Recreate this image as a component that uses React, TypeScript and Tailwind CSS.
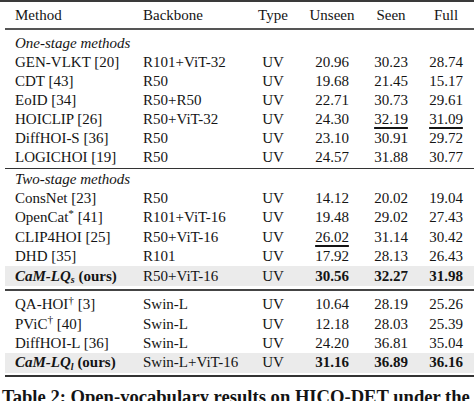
import type { ReactNode } from "react";

type Row = {
  method: ReactNode;
  backbone: string;
  unseen: string;
  seen: string;
  full: string;
  u?: ("unseen" | "seen" | "full")[];
  ours?: boolean;
  h?: string;
};

const grid = "grid grid-cols-[138px_107px_46px_72px_46px_64px] items-center";

function Cell({ v, under, bold }: { v: string; under?: boolean; bold?: boolean }) {
  return (
    <div className={`text-center ${bold ? "font-bold" : ""}`}>
      <span className={under ? "underline decoration-[1.5px] underline-offset-[3px]" : ""}>{v}</span>
    </div>
  );
}

function DataRow({ r }: { r: Row }) {
  return (
    <div className={`${grid} ${r.h ?? "h-[19px]"} ${r.ours ? "bg-[#ebebeb]" : ""}`}>
      <div className={`pl-[10px] whitespace-nowrap ${r.ours ? "font-bold" : ""}`}>{r.method}</div>
      <div className="whitespace-nowrap">{r.backbone}</div>
      <div className="text-center">UV</div>
      <Cell v={r.unseen} under={r.u?.includes("unseen")} bold={r.ours} />
      <Cell v={r.seen} under={r.u?.includes("seen")} bold={r.ours} />
      <Cell v={r.full} under={r.u?.includes("full")} bold={r.ours} />
    </div>
  );
}

function Section({ title, h }: { title: string; h: string }) {
  return <div className={`${h} flex items-center pl-[10px] italic`}>{title}</div>;
}

const oneStage: Row[] = [
  { method: "GEN-VLKT [20]", backbone: "R101+ViT-32", unseen: "20.96", seen: "30.23", full: "28.74" },
  { method: "CDT [43]", backbone: "R50", unseen: "19.68", seen: "21.45", full: "15.17" },
  { method: "EoID [34]", backbone: "R50+R50", unseen: "22.71", seen: "30.73", full: "29.61" },
  { method: "HOICLIP [26]", backbone: "R50+ViT-32", unseen: "24.30", seen: "32.19", full: "31.09", u: ["seen", "full"] },
  { method: "DiffHOI-S [36]", backbone: "R50", unseen: "23.10", seen: "30.91", full: "29.72" },
  { method: "LOGICHOI [19]", backbone: "R50", unseen: "24.57", seen: "31.88", full: "30.77" },
];

const twoStage: Row[] = [
  { method: "ConsNet [23]", backbone: "R50", unseen: "14.12", seen: "20.02", full: "19.04", h: "h-[19.4px]" },
  {
    method: (
      <>
        OpenCat<sup>*</sup> [41]
      </>
    ),
    backbone: "R101+ViT-16",
    unseen: "19.48",
    seen: "29.02",
    full: "27.43",
    h: "h-[19.4px]",
  },
  { method: "CLIP4HOI [25]", backbone: "R50+ViT-16", unseen: "26.02", seen: "31.14", full: "30.42", u: ["unseen"], h: "h-[19.4px]" },
  { method: "DHD [35]", backbone: "R101", unseen: "17.92", seen: "28.13", full: "26.43", h: "h-[19.4px]" },
  {
    method: (
      <>
        <i>
          CaM-LQ<sub className="text-[10px]">s</sub>
        </i>{" "}
        (ours)
      </>
    ),
    backbone: "R50+ViT-16",
    unseen: "30.56",
    seen: "32.27",
    full: "31.98",
    ours: true,
    h: "h-[19.4px]",
  },
];

const swin: Row[] = [
  {
    method: (
      <>
        QA-HOI<sup>†</sup> [3]
      </>
    ),
    backbone: "Swin-L",
    unseen: "10.64",
    seen: "28.19",
    full: "25.26",
    h: "h-[19.3px]",
  },
  {
    method: (
      <>
        PViC<sup>†</sup> [40]
      </>
    ),
    backbone: "Swin-L",
    unseen: "12.18",
    seen: "28.03",
    full: "25.39",
    h: "h-[19.3px]",
  },
  { method: "DiffHOI-L [36]", backbone: "Swin-L", unseen: "24.20", seen: "36.81", full: "35.04", h: "h-[19.3px]" },
  {
    method: (
      <>
        <i>
          CaM-LQ<sub className="text-[10px]">l</sub>
        </i>{" "}
        (ours)
      </>
    ),
    backbone: "Swin-L+ViT-16",
    unseen: "31.16",
    seen: "36.89",
    full: "36.16",
    ours: true,
    h: "h-[19.3px]",
  },
];

export default function App() {
  return (
    <div className="h-[401px] w-[474px] overflow-hidden bg-white font-serif text-[#141414] text-[15px] leading-none">
      <div className="font-['Liberation_Serif']">
        <div className="h-[2px] bg-[#3a3a3a]" />
        <div className="pl-[5px]">
          <div className={`${grid} h-[26px]`}>
            <div className="pl-[10px]">Method</div>
            <div>Backbone</div>
            <div className="text-center">Type</div>
            <div className="text-center">Unseen</div>
            <div className="text-center">Seen</div>
            <div className="text-center">Full</div>
          </div>
          <div className="h-[2px] bg-[#555]" />
          <div className="pt-[3.5px]">
            <Section title="One-stage methods" h="h-[19px]" />
            {oneStage.map((r, i) => (
              <DataRow key={i} r={r} />
            ))}
          </div>
          <div className="mt-[1.5px] h-[1px] bg-[#333]" />
          <div className="pt-[0.5px]">
            <Section title="Two-stage methods" h="h-[19.4px]" />
            {twoStage.map((r, i) => (
              <DataRow key={i} r={r} />
            ))}
          </div>
          <div className="mt-[3px] h-[2px] bg-[#444]" />
          <div className="pt-[4.5px]">
            {swin.map((r, i) => (
              <DataRow key={i} r={r} />
            ))}
          </div>
          <div className="mt-[2px] h-[2px] bg-[#333]" />
        </div>
        <div className="mt-[11px] pl-[2px] whitespace-nowrap text-[18.6px] font-bold">
          Table 2: Open-vocabulary results on HICO-DET under the
        </div>
      </div>
    </div>
  );
}
